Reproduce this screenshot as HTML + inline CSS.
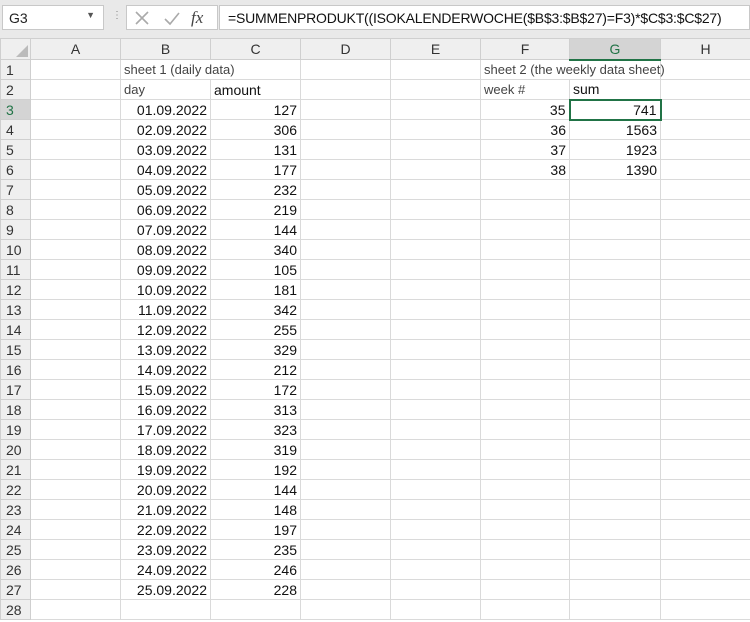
<!DOCTYPE html>
<html><head><style>
*{margin:0;padding:0;box-sizing:border-box}
body{width:750px;height:622px;background:#fff;font-family:"Liberation Sans",Arial,sans-serif;position:relative;overflow:hidden}
.top{position:absolute;left:0;top:0;width:750px;height:38px;background:#e9e9e9}
.nb{position:absolute;left:2px;top:5px;width:102px;height:25px;background:#fff;border:1px solid #c8c8c8;font-size:14px;padding:4px 6px;color:#222}
.nb span{position:absolute;right:8px;top:4px;font-size:9px;color:#555}
.fx{position:absolute;left:126px;top:5px;width:92px;height:25px;background:#fff;border:1px solid #c8c8c8;color:#aaa}
.fb{position:absolute;left:219px;top:5px;width:531px;height:25px;background:#fff;border:1px solid #c8c8c8;font-size:14px;padding:4px 8px;color:#111;white-space:nowrap;letter-spacing:-0.2px}
.grid{position:absolute;left:0;top:38px}
table{border-collapse:collapse;table-layout:fixed;width:750px}
td{height:20px;border:1px solid #dadada;font-size:14px;color:#111;padding:0 3px;white-space:nowrap;overflow:visible}
tr.h td{background:#efefef;color:#333;text-align:center;font-size:14px;border-color:#cfcfcf;height:21px}
td.rh{background:#efefef;color:#333;text-align:left;padding-left:5px;border-color:#cfcfcf}
.r{text-align:right}
.s{font-size:13px;color:#444}
</style></head><body>
<div class="top">
<div class="nb">G3<span>▼</span></div>
<div style="position:absolute;left:112px;top:10px;color:#888;font-size:10px">⋮</div>
<div class="fx">
<svg width="92" height="25"><path d="M9 6l12 12M21 6L9 18" stroke="#aaa" stroke-width="1.6"/><path d="M38 13l5 5 9-11" stroke="#aaa" stroke-width="1.6" fill="none"/></svg>
<span style="position:absolute;left:64px;top:2px;font-family:'Liberation Serif',serif;font-style:italic;font-size:17px;color:#444">fx</span></div>
<div class="fb">=SUMMENPRODUKT((ISOKALENDERWOCHE($B$3:$B$27)=F3)*$C$3:$C$27)</div>
</div>
<div class="grid"><table>
<colgroup><col style="width:30px"><col style="width:90px"><col style="width:90px"><col style="width:90px"><col style="width:90px"><col style="width:90px"><col style="width:89px"><col style="width:91px"><col style="width:90px"></colgroup>
<tr class="h"><td style="position:relative"><svg width="12" height="12" style="position:absolute;right:2px;bottom:2px"><path d="M12 0L12 12L0 12Z" fill="#bbb"/></svg></td><td>A</td><td>B</td><td>C</td><td>D</td><td>E</td><td>F</td><td style="background:#d4d4d4;color:#217346;border-bottom:2px solid #217346">G</td><td>H</td></tr>
<tr><td class="rh">1</td><td></td><td class="s" style="border-right:none">sheet 1 (daily data)</td><td style="border-left:none"></td><td></td><td></td><td class="s" style="border-right:none">sheet 2 (the weekly data sheet)</td><td style="border-left:none"></td><td></td></tr>
<tr><td class="rh">2</td><td></td><td class="s">day</td><td>amount</td><td></td><td></td><td class="s">week #</td><td>sum</td><td></td></tr>
<tr><td class="rh" style="background:#d4d4d4;color:#217346">3</td><td></td><td class="r">01.09.2022</td><td class="r">127</td><td></td><td></td><td class="r">35</td><td class="r" style="border:2px solid #217346">741</td><td></td></tr>
<tr><td class="rh">4</td><td></td><td class="r">02.09.2022</td><td class="r">306</td><td></td><td></td><td class="r">36</td><td class="r">1563</td><td></td></tr>
<tr><td class="rh">5</td><td></td><td class="r">03.09.2022</td><td class="r">131</td><td></td><td></td><td class="r">37</td><td class="r">1923</td><td></td></tr>
<tr><td class="rh">6</td><td></td><td class="r">04.09.2022</td><td class="r">177</td><td></td><td></td><td class="r">38</td><td class="r">1390</td><td></td></tr>
<tr><td class="rh">7</td><td></td><td class="r">05.09.2022</td><td class="r">232</td><td></td><td></td><td></td><td></td><td></td></tr>
<tr><td class="rh">8</td><td></td><td class="r">06.09.2022</td><td class="r">219</td><td></td><td></td><td></td><td></td><td></td></tr>
<tr><td class="rh">9</td><td></td><td class="r">07.09.2022</td><td class="r">144</td><td></td><td></td><td></td><td></td><td></td></tr>
<tr><td class="rh">10</td><td></td><td class="r">08.09.2022</td><td class="r">340</td><td></td><td></td><td></td><td></td><td></td></tr>
<tr><td class="rh">11</td><td></td><td class="r">09.09.2022</td><td class="r">105</td><td></td><td></td><td></td><td></td><td></td></tr>
<tr><td class="rh">12</td><td></td><td class="r">10.09.2022</td><td class="r">181</td><td></td><td></td><td></td><td></td><td></td></tr>
<tr><td class="rh">13</td><td></td><td class="r">11.09.2022</td><td class="r">342</td><td></td><td></td><td></td><td></td><td></td></tr>
<tr><td class="rh">14</td><td></td><td class="r">12.09.2022</td><td class="r">255</td><td></td><td></td><td></td><td></td><td></td></tr>
<tr><td class="rh">15</td><td></td><td class="r">13.09.2022</td><td class="r">329</td><td></td><td></td><td></td><td></td><td></td></tr>
<tr><td class="rh">16</td><td></td><td class="r">14.09.2022</td><td class="r">212</td><td></td><td></td><td></td><td></td><td></td></tr>
<tr><td class="rh">17</td><td></td><td class="r">15.09.2022</td><td class="r">172</td><td></td><td></td><td></td><td></td><td></td></tr>
<tr><td class="rh">18</td><td></td><td class="r">16.09.2022</td><td class="r">313</td><td></td><td></td><td></td><td></td><td></td></tr>
<tr><td class="rh">19</td><td></td><td class="r">17.09.2022</td><td class="r">323</td><td></td><td></td><td></td><td></td><td></td></tr>
<tr><td class="rh">20</td><td></td><td class="r">18.09.2022</td><td class="r">319</td><td></td><td></td><td></td><td></td><td></td></tr>
<tr><td class="rh">21</td><td></td><td class="r">19.09.2022</td><td class="r">192</td><td></td><td></td><td></td><td></td><td></td></tr>
<tr><td class="rh">22</td><td></td><td class="r">20.09.2022</td><td class="r">144</td><td></td><td></td><td></td><td></td><td></td></tr>
<tr><td class="rh">23</td><td></td><td class="r">21.09.2022</td><td class="r">148</td><td></td><td></td><td></td><td></td><td></td></tr>
<tr><td class="rh">24</td><td></td><td class="r">22.09.2022</td><td class="r">197</td><td></td><td></td><td></td><td></td><td></td></tr>
<tr><td class="rh">25</td><td></td><td class="r">23.09.2022</td><td class="r">235</td><td></td><td></td><td></td><td></td><td></td></tr>
<tr><td class="rh">26</td><td></td><td class="r">24.09.2022</td><td class="r">246</td><td></td><td></td><td></td><td></td><td></td></tr>
<tr><td class="rh">27</td><td></td><td class="r">25.09.2022</td><td class="r">228</td><td></td><td></td><td></td><td></td><td></td></tr>
<tr><td class="rh">28</td><td></td><td></td><td></td><td></td><td></td><td></td><td></td><td></td></tr>
</table></div>
</body></html>
